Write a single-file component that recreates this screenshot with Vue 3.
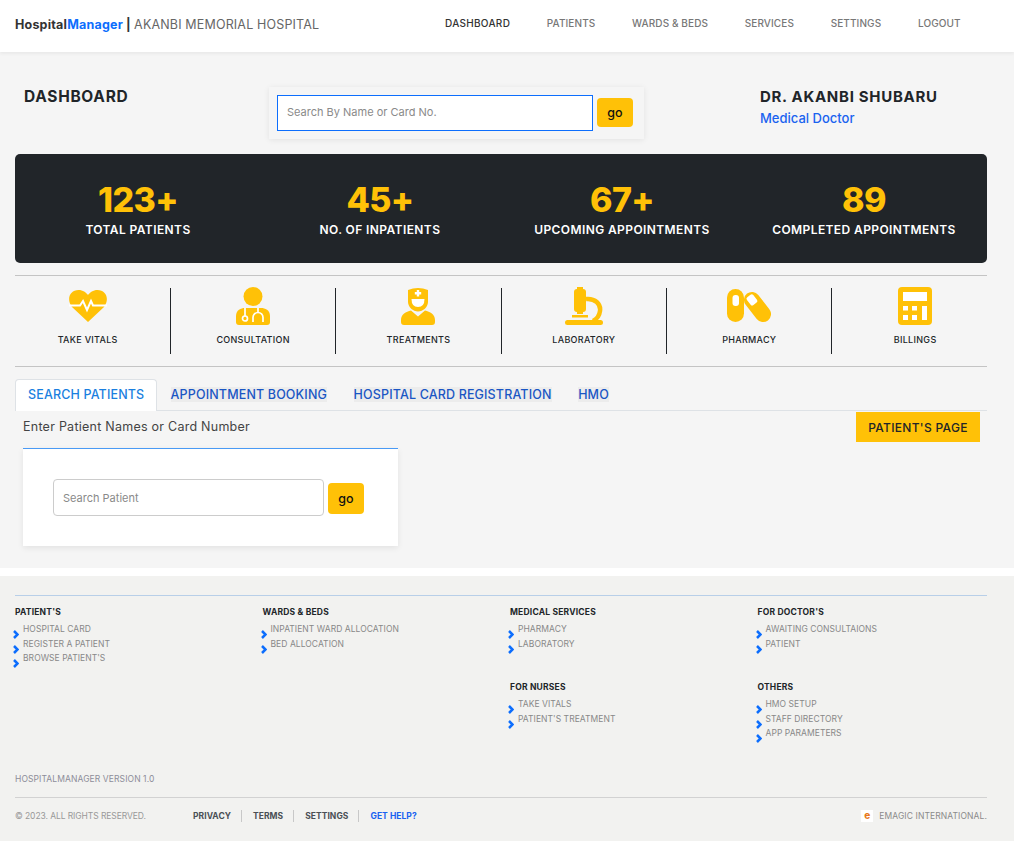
<template>
  <div class="page">
    <header class="topbar">
      <div class="brand">
        <b>Hospital</b><b class="blue">Manager</b><b> | </b><span class="brand-name">AKANBI MEMORIAL HOSPITAL</span>
      </div>
      <nav class="nav">
        <a v-for="(item, i) in navItems" :key="item" :class="{ active: i === 0 }">{{ item }}</a>
      </nav>
    </header>

    <main class="main">
      <section class="head">
        <h1 class="title">DASHBOARD</h1>
        <div class="search-card">
          <input class="search-input" placeholder="Search By Name or Card No." />
          <button class="go-btn">go</button>
        </div>
        <div class="user">
          <div class="user-name">DR. AKANBI SHUBARU</div>
          <div class="user-role">Medical Doctor</div>
        </div>
      </section>

      <section class="stats">
        <div v-for="stat in stats" :key="stat.label" class="stat">
          <div class="stat-num">{{ stat.num }}</div>
          <div class="stat-label">{{ stat.label }}</div>
        </div>
      </section>

      <section class="shortcuts">
        <div class="shortcut">
          <svg width="38" height="38" viewBox="0 -2 38 38">
            <path fill="#ffc107" d="M19 33 3 18C-3 10 1 1 9.500 1 14 1 17 3.500 19 6 21 3.500 24 1 28.500 1 37 1 41 10 35 18Z" />
            <polyline fill="none" stroke="#fff" stroke-width="2" points="0,16.500 11,16.500 14,12 18,21 22,12 24,16.500 38,16.500" />
          </svg>
          <span>TAKE VITALS</span>
        </div>
        <div class="shortcut">
          <svg width="34" height="38" viewBox="0 0 34 38">
            <circle cx="17" cy="9.500" r="9.500" fill="#ffc107" />
            <path fill="#ffc107" d="M0 35V29C0 23 5 21 9 21H25C29 21 34 23 34 29V35Q34 38 31 38H3Q0 38 0 35Z" />
            <g fill="none" stroke="#fff" stroke-width="1.700">
              <path d="M9 21V29" />
              <circle cx="9" cy="31.500" r="2.500" />
              <path d="M22 21V25.500M17 35V30.500A5 5 0 0 1 27 30.500V35" />
            </g>
          </svg>
          <span>CONSULTATION</span>
        </div>
        <div class="shortcut">
          <svg width="34" height="38" viewBox="0 0 34 38">
            <path fill="#ffc107" d="M7 3Q17-1 27 3V15C27 20 22 24.500 17 24.500 12 24.500 7 20 7 15Z" />
            <path fill="#fff" d="M10.500 12H23.500Q23.500 20 17 20 10.500 20 10.500 12Z" />
            <path fill="#fff" d="M15.800 3H18.200V5H20.200V7.400H18.200V9.400H15.800V7.400H13.800V5H15.800Z" />
            <path fill="#ffc107" d="M0 35V33C0 27 5 25 10 23.500L17 29.500 24 23.500C29 25 34 27 34 33V35Q34 38 31 38H3Q0 38 0 35Z" />
          </svg>
          <span>TREATMENTS</span>
        </div>
        <div class="shortcut">
          <svg width="38" height="38" viewBox="0 0 38 38">
            <g fill="#ffc107">
              <rect x="12" y="0" width="6" height="4" />
              <rect x="9" y="2" width="12" height="23" rx="3" />
              <rect x="12" y="25" width="6" height="2" />
              <rect x="7" y="28" width="16" height="2.500" />
              <rect x="0" y="33" width="38" height="5" rx="2.500" />
            </g>
            <path fill="none" stroke="#ffc107" stroke-width="4.500" d="M21 12C30 11 36 17 35 24 34.500 28 32 32 28 34" />
          </svg>
          <span>LABORATORY</span>
        </div>
        <div class="shortcut">
          <svg width="44" height="38" viewBox="0 -2 44 38">
            <rect x="0" y="0" width="17" height="33" rx="8.500" fill="#ffc107" />
            <rect x="5.500" y="6" width="6.500" height="11" rx="3" fill="#fff" />
            <rect x="13.500" y="10" width="34" height="16" rx="8" fill="#ffc107" transform="rotate(52 30.500 18)" />
            <rect x="16.500" y="14" width="10" height="8" rx="2" fill="#fff" transform="rotate(52 30.500 18)" />
          </svg>
          <span>PHARMACY</span>
        </div>
        <div class="shortcut">
          <svg width="34" height="38" viewBox="0 0 34 38">
            <rect width="34" height="38" rx="4" fill="#ffc107" />
            <g fill="#fff">
              <rect x="5" y="5" width="24" height="9" />
              <rect x="5" y="19" width="5" height="4.500" />
              <rect x="14" y="19" width="5" height="4.500" />
              <rect x="5" y="28" width="5" height="5" />
              <rect x="14" y="28" width="5" height="5" />
              <rect x="24" y="19" width="5" height="14" />
            </g>
          </svg>
          <span>BILLINGS</span>
        </div>
      </section>

      <section class="panel">
        <div class="tabs">
          <a class="tab tab-active">SEARCH PATIENTS</a>
          <a v-for="tab in tabs" :key="tab" class="tab"><span>{{ tab }}</span></a>
        </div>
        <div class="panel-top">
          <div class="panel-label">Enter Patient Names or Card Number</div>
          <button class="page-btn">PATIENT'S PAGE</button>
        </div>
        <div class="patient-card">
          <input class="patient-input" placeholder="Search Patient" />
          <button class="go-btn go-small">go</button>
        </div>
      </section>
    </main>

    <footer class="footer">
      <div class="foot-grid">
        <div v-for="col in footCols" :key="col.title" class="foot-col" :class="col.cls">
          <h4>{{ col.title }}</h4>
          <ul>
            <li v-for="link in col.links" :key="link">
              <svg width="6" height="9" viewBox="0 0 6 9"><path fill="none" stroke="#0d6efd" stroke-width="2.500" d="M1 1 4.500 4.500 1 8" /></svg>
              <span>{{ link }}</span>
            </li>
          </ul>
        </div>
      </div>
      <div class="version">HOSPITALMANAGER VERSION 1.0</div>
      <div class="foot-bottom">
        <span class="copy">© 2023. ALL RIGHTS RESERVED.</span>
        <div class="foot-links">
          <a>PRIVACY</a>
          <a>TERMS</a>
          <a>SETTINGS</a>
          <a class="help">GET HELP?</a>
        </div>
        <div class="emagic">
          <i>e</i>
          <span>EMAGIC INTERNATIONAL.</span>
        </div>
      </div>
    </footer>
  </div>
</template>

<script setup>
const navItems = ['DASHBOARD', 'PATIENTS', 'WARDS & BEDS', 'SERVICES', 'SETTINGS', 'LOGOUT']

const stats = [
  { num: '123+', label: 'TOTAL PATIENTS' },
  { num: '45+', label: 'NO. OF INPATIENTS' },
  { num: '67+', label: 'UPCOMING APPOINTMENTS' },
  { num: '89', label: 'COMPLETED APPOINTMENTS' }
]

const tabs = ['APPOINTMENT BOOKING', 'HOSPITAL CARD REGISTRATION', 'HMO']

const footCols = [
  { title: "PATIENT'S", links: ['HOSPITAL CARD', 'REGISTER A PATIENT', "BROWSE PATIENT'S"] },
  { title: 'WARDS & BEDS', links: ['INPATIENT WARD ALLOCATION', 'BED ALLOCATION'] },
  { title: 'MEDICAL SERVICES', links: ['PHARMACY', 'LABORATORY'] },
  { title: "FOR DOCTOR'S", links: ['AWAITING CONSULTAIONS', 'PATIENT'] },
  { title: 'FOR NURSES', links: ['TAKE VITALS', "PATIENT'S TREATMENT"], cls: 'col-3' },
  { title: 'OTHERS', links: ['HMO SETUP', 'STAFF DIRECTORY', 'APP PARAMETERS'] }
]
</script>

<style>
body {
  background: #fff;
}
</style>

<style scoped>
.page {
  font-family: Inter, "Open Sans", sans-serif;
  color: #212529;
  width: 1014px;
  height: 853px;
  overflow: hidden;
}

.topbar {
  height: 52px;
  background: #fff;
  box-shadow: 0 2px 3px rgba(0, 0, 0, 0.05);
  display: flex;
  align-items: center;
  padding: 0 0 0 15px;
  position: relative;
}

.brand {
  font-size: 12.500px;
  margin-top: -3px;
  white-space: pre;
  color: #333;
  letter-spacing: 0.2px;
}

.brand b {
  font-weight: 700;
}

.brand .blue {
  color: #0d6efd;
}

.brand-name {
  color: #666;
  letter-spacing: 0.16px;
}

.nav {
  position: absolute;
  left: 445px;
  top: 17px;
  display: flex;
  gap: 36.700px;
  font-size: 10px;
  line-height: 13px;
  font-weight: 500;
  color: #777;
  letter-spacing: 0.1px;
  white-space: nowrap;
}

.nav .active {
  color: #333;
  letter-spacing: 0.3px;
}

.main {
  background: #f5f5f5;
  height: 516px;
  padding: 0 27px 0 15px;
}

.head {
  height: 102px;
  display: flex;
  position: relative;
}

.title {
  margin: 36px 0 0 9px;
  width: 245px;
  font-size: 15.500px;
  line-height: 18px;
  font-weight: 700;
  letter-spacing: 0.7px;
}

.search-card {
  margin-top: 35px;
  width: 375px;
  height: 52px;
  padding: 8px;
  background: #f5f5f5;
  box-shadow: 0 1px 6px rgba(0, 0, 0, 0.08);
  box-sizing: border-box;
  display: flex;
  gap: 4px;
}

.search-input {
  width: 316px;
  height: 36px;
  box-sizing: border-box;
  border: 1.500px solid #0d6efd;
  background: #fff;
  padding: 0 9px 2px;
  font: 11px Inter, sans-serif;
  outline: none;
}

.search-input::placeholder,
.patient-input::placeholder {
  color: #8a8a8a;
  opacity: 1;
}

.go-btn {
  width: 36px;
  height: 29px;
  margin-top: 3px;
  background: #ffc107;
  border: none;
  border-radius: 4px;
  color: #111;
  padding: 0;
  font: 500 12.500px Inter, sans-serif;
}

.user {
  margin-left: 116px;
  margin-top: 36px;
}

.user-name {
  font-size: 15px;
  line-height: 18px;
  font-weight: 700;
  letter-spacing: 0.7px;
  white-space: nowrap;
}

.user-role {
  margin-top: 3px;
  font-size: 13px;
  line-height: 18px;
  font-weight: 500;
  color: #1a63f0;
}

.stats {
  width: 972px;
  height: 109px;
  background: #212529;
  border-radius: 5px;
  display: grid;
  grid-template-columns: repeat(4, 1fr);
  padding: 0 2px;
  box-sizing: border-box;
  text-align: center;
}

.stat-num {
  margin-top: 25px;
  font-size: 34px;
  line-height: 42px;
  font-weight: 800;
  letter-spacing: -0.6px;
  color: #ffc107;
}

.stat-label {
  margin-top: 1px;
  font-size: 12px;
  line-height: 16px;
  font-weight: 600;
  letter-spacing: 0.4px;
  color: #fff;
  white-space: nowrap;
}

.shortcuts {
  margin-top: 12px;
  width: 972px;
  height: 92px;
  box-sizing: border-box;
  border-top: 1px solid #c4c4c4;
  border-bottom: 1px solid #c4c4c4;
  padding: 12px 0 0 0;
  display: grid;
  grid-template-columns: repeat(6, 165.400px);
}

.shortcut {
  position: relative;
  left: -9.500px;
  height: 66px;
  border-right: 1px solid #212529;
  display: flex;
  flex-direction: column;
  align-items: center;
  font-size: 9px;
  font-weight: 500;
  letter-spacing: 0.3px;
}

.shortcut:last-child {
  border-right: none;
}

.shortcut svg {
  margin-top: -1px;
}

.shortcut span {
  margin-top: 9px;
  line-height: 12px;
}

.panel {
  position: relative;
}

.tabs {
  margin-top: 12px;
  height: 32px;
  width: 972px;
  border-bottom: 1px solid #dee2e6;
  box-sizing: border-box;
  display: flex;
  font-size: 12.500px;
  line-height: 16px;
}

.tab {
  padding: 8px 13.300px 0;
  color: #1a56c4;
  letter-spacing: 0.15px;
  font-weight: 500;
  white-space: nowrap;
}

.tab span {
  background: #ececec;
}

.tab-active {
  height: 32px;
  box-sizing: border-box;
  background: #fff;
  color: #1a7fe0;
  border: 1px solid #dee2e6;
  border-bottom: none;
  border-radius: 4px 4px 0 0;
  padding: 7px 12px 0;
}

.panel-top {
  width: 965px;
  height: 37px;
  display: flex;
  justify-content: space-between;
  align-items: flex-start;
  padding-left: 8px;
  box-sizing: border-box;
}

.panel-label {
  margin-top: 8px;
  font-size: 12.500px;
  line-height: 15px;
  color: #444;
  letter-spacing: 0.25px;
}

.page-btn {
  margin-top: 1px;
  width: 124px;
  height: 30px;
  border: none;
  background: #ffc107;
  color: #212529;
  font: 500 12px Inter, sans-serif;
  letter-spacing: 0.3px;
  padding: 0;
}

.patient-card {
  margin-left: 8px;
  width: 375px;
  height: 98px;
  box-sizing: border-box;
  background: #fff;
  border-top: 1px solid #4a9af5;
  box-shadow: 0 2px 6px rgba(0, 0, 0, 0.08);
  display: flex;
  padding: 30px 30px 0;
  gap: 4px;
}

.patient-input {
  width: 271px;
  height: 37px;
  box-sizing: border-box;
  border: 1px solid #ccc;
  border-radius: 4px;
  background: #fff;
  padding: 0 9px;
  font: 11px Inter, sans-serif;
  outline: none;
}

.go-small {
  height: 31px;
  margin-top: 4px;
}

.footer {
  margin-top: 8px;
  height: 265px;
  background: #f2f2f0;
  padding: 19px 0 0 15px;
  box-sizing: border-box;
}

.foot-grid {
  width: 972px;
  height: 178px;
  border-top: 1px solid #b8cfe8;
  box-sizing: border-box;
  display: grid;
  grid-template-columns: repeat(4, 247.500px);
  grid-template-rows: 75px auto;
  padding-top: 10px;
}

.col-3 {
  grid-column: 3;
}

.foot-col h4 {
  margin: 0 0 5px;
  font-size: 8.500px;
  line-height: 12px;
  font-weight: 700;
  color: #212529;
  letter-spacing: 0.2px;
}

.foot-col ul {
  list-style: none;
  margin: 0;
  padding: 0;
}

.foot-col li {
  display: flex;
  gap: 4px;
  margin-left: -2px;
  height: 14.500px;
  font-size: 8.500px;
  line-height: 12px;
  color: #888;
  letter-spacing: 0.05px;
}

.foot-col li svg {
  margin-top: 7px;
  flex: none;
}

.version {
  font-size: 8.500px;
  line-height: 12px;
  color: #8d8d99;
  letter-spacing: 0.1px;
}

.foot-bottom {
  margin-top: 12px;
  width: 972px;
  border-top: 1px solid #d2d2d2;
  padding-top: 12px;
  display: flex;
  align-items: center;
  font-size: 8.500px;
  line-height: 12px;
  position: relative;
}

.copy {
  width: 178px;
  color: #999;
  letter-spacing: -0.08px;
}

.foot-links {
  display: flex;
  font-weight: 700;
  color: #4a4f55;
  letter-spacing: 0.05px;
}

.foot-links a {
  padding-right: 10px;
  margin-right: 11px;
  border-right: 1px solid #c8c8c8;
}

.foot-links .help {
  color: #1a63f0;
  border: none;
}

.emagic {
  margin-left: auto;
  display: flex;
  align-items: center;
  gap: 6px;
  color: #8a8a8a;
  letter-spacing: 0.1px;
}

.emagic i {
  width: 12px;
  height: 12px;
  background: #fff;
  color: #e8791c;
  font-style: normal;
  font-weight: 800;
  font-size: 10px;
  line-height: 11px;
  text-align: center;
}
</style>
